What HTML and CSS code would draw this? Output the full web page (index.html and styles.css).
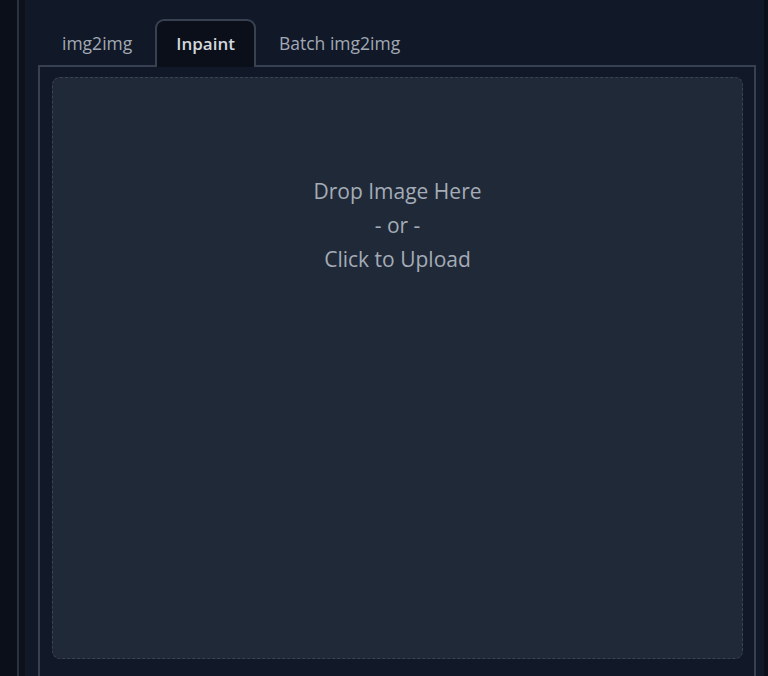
FILE: index.html
```html
<!DOCTYPE html>
<html>
<head>
<meta charset="utf-8">
<link rel="stylesheet" href="styles.css">
</head>
<body>
<div class="outer">
  <div class="column">
    <div class="tabs">
      <div class="tabbar">
        <div class="tab">img2img</div>
        <div class="tab active">Inpaint</div>
        <div class="tab">Batch img2img</div>
      </div>
      <div class="panel">
        <div class="drop">
          <div class="droptext">Drop Image Here<br>- or -<br>Click to Upload</div>
        </div>
      </div>
    </div>
  </div>
</div>
</body>
</html>
```
FILE: styles.css
```css
html, body {
  margin: 0;
  padding: 0;
  background: #0b0f19;
  height: 676px;
  overflow: hidden;
  font-family: "Open Sans", "Noto Sans", sans-serif;
}
.outer {
  margin-left: 17px;
  width: 747px;
  height: 676px;
  border-left: 2px solid #2b3342;
  background: #0c111c;
  box-sizing: border-box;
  padding-left: 6px;
}
.column {
  background: #111827;
  height: 676px;
  padding: 19px 8px 0 13px;
  box-sizing: border-box;
}
.tabbar {
  display: flex;
  align-items: flex-end;
  height: 48px;
  padding-left: 3px;
  position: relative;
  z-index: 1;
}
.tab {
  height: 46px;
  box-sizing: border-box;
  padding: 0 19px 4px;
  display: flex;
  align-items: center;
  font-size: 17.5px;
  color: #a2a9b5;
  border: 2px solid transparent;
  border-bottom: none;
  border-radius: 9px 9px 0 0;
  margin-right: 2px;
}
.tab.active {
  height: 48px;
  background: #0b0f19;
  border-color: #374151;
  color: #d3d7de;
  font-weight: 600;
  font-size: 17px;
  padding-bottom: 2px;
}
.panel {
  margin-top: -2px;
  border: 2px solid #374151;
  border-bottom: none;
  height: 620px;
  padding: 10px 11px 0 12px;
}
.drop {
  height: 582px;
  box-sizing: border-box;
  background: #202937;
  border: 1px dashed #3a4352;
  border-radius: 8px;
  display: flex;
  justify-content: center;
  padding-top: 96px;
}
.droptext {
  text-align: center;
  font-size: 21px;
  line-height: 34px;
  color: #a4acb8;
}
```
